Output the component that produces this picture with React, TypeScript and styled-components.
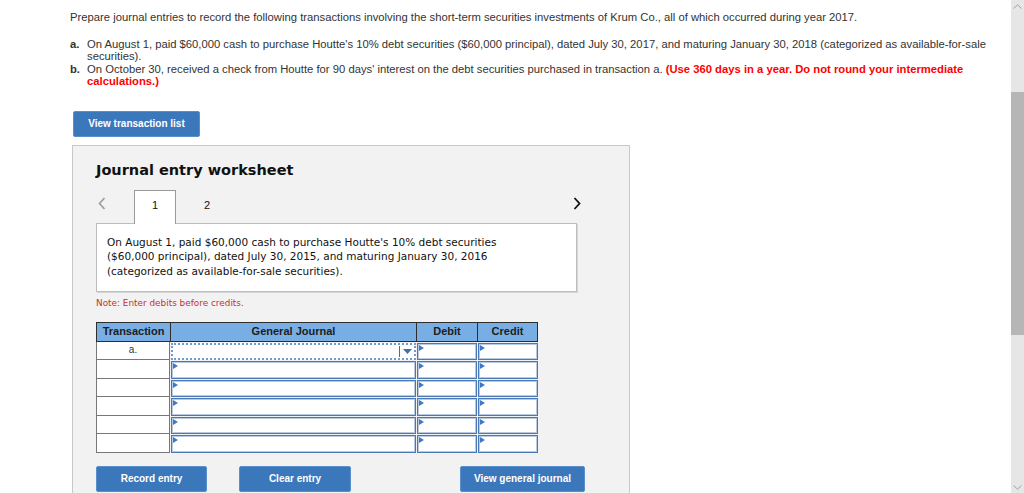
import React from 'react';
import styled, { createGlobalStyle } from 'styled-components';

const GlobalStyle = createGlobalStyle`
  html, body {
    margin: 0;
    padding: 0;
    background: #fff;
    overflow: hidden;
  }
  body {
    font-family: "Liberation Sans", Arial, sans-serif;
  }
`;

const rows = ['a.', '', '', '', '', ''];

const App: React.FC = () => {
  return (
    <Page>
      <GlobalStyle />
      <Content>
        <Intro>
          Prepare journal entries to record the following transactions involving the short-term securities investments
          of Krum Co., all of which occurred during year 2017.
        </Intro>
        <ItemList>
          <Item>
            <ItemLabel>a.</ItemLabel>
            <ItemText>
              On August 1, paid $60,000 cash to purchase Houtte's 10% debt securities ($60,000 principal), dated July 30,
              2017, and maturing January 30, 2018 (categorized as available-for-sale securities).
            </ItemText>
          </Item>
          <Item>
            <ItemLabel>b.</ItemLabel>
            <ItemText>
              On October 30, received a check from Houtte for 90 days' interest on the debt securities purchased in
              transaction a. <Warning>(Use 360 days in a year. Do not round your intermediate calculations.)</Warning>
            </ItemText>
          </Item>
        </ItemList>

        <ListButton>View transaction list</ListButton>

        <Worksheet>
          <Title>Journal entry worksheet</Title>
          <TabsRow>
            <ArrowSlot>
              <svg width="8" height="13" viewBox="0 0 8 13">
                <path d="M6.5 1 L1.5 6.5 L6.5 12" fill="none" stroke="#9a9a9a" strokeWidth="1.6" />
              </svg>
            </ArrowSlot>
            <Tab $active>1</Tab>
            <Tab>2</Tab>
            <Spacer />
            <ArrowSlot $right>
              <svg width="8" height="13" viewBox="0 0 8 13">
                <path d="M1.5 1 L6.5 6.5 L1.5 12" fill="none" stroke="#111" strokeWidth="1.8" />
              </svg>
            </ArrowSlot>
          </TabsRow>
          <Description>
            On August 1, paid $60,000 cash to purchase Houtte's 10% debt securities
            <br />
            ($60,000 principal), dated July 30, 2015, and maturing January 30, 2016
            <br />
            (categorized as available-for-sale securities).
          </Description>
          <Note>Note: Enter debits before credits.</Note>

          <JournalGrid>
            <HeadCell>Transaction</HeadCell>
            <HeadCell>General Journal</HeadCell>
            <HeadCell>Debit</HeadCell>
            <HeadCell $last>Credit</HeadCell>
            {rows.map((label, i) => (
              <React.Fragment key={i}>
                <TxCell>{label}</TxCell>
                {i === 0 ? (
                  <FocusCell>
                    <Caret>
                      <svg width="9" height="5" viewBox="0 0 9 5">
                        <path d="M0 0 L9 0 L4.5 5 Z" fill="#3f6fae" />
                      </svg>
                    </Caret>
                  </FocusCell>
                ) : (
                  <EntryCell />
                )}
                <EntryCell />
                <EntryCell />
              </React.Fragment>
            ))}
          </JournalGrid>

          <ButtonRow>
            <ActionButton $w={111}>Record entry</ActionButton>
            <ActionButton $w={112}>Clear entry</ActionButton>
            <Spacer />
            <ActionButton $w={125}>View general journal</ActionButton>
          </ButtonRow>
        </Worksheet>
      </Content>

      <ScrollTrack>
        <ScrollArrow>
          <svg width="9" height="5" viewBox="0 0 9 5">
            <path d="M0.5 4.5 L4.5 0.8 L8.5 4.5" fill="none" stroke="#a0a0a0" strokeWidth="1" />
          </svg>
        </ScrollArrow>
        <ScrollGap $h={80} />
        <ScrollThumb />
        <Spacer />
        <ScrollArrow>
          <svg width="9" height="5" viewBox="0 0 9 5">
            <path d="M0.5 0.5 L4.5 4.2 L8.5 0.5" fill="none" stroke="#a0a0a0" strokeWidth="1" />
          </svg>
        </ScrollArrow>
      </ScrollTrack>
    </Page>
  );
};

export default App;

const Page = styled.div`
  display: flex;
  height: 493px;
  overflow: hidden;
`;

const Content = styled.div`
  flex: 1;
  padding: 11px 14px 0 70px;
  color: #333;
  font-size: 11.25px;
  line-height: 12.5px;
`;

const Intro = styled.p`
  margin: 0 0 14px;
`;

const ItemList = styled.div`
  display: flex;
  flex-direction: column;
`;

const Item = styled.div`
  display: flex;
`;

const ItemLabel = styled.span`
  flex: 0 0 17px;
  font-weight: bold;
`;

const ItemText = styled.span`
  flex: 1;
`;

const Warning = styled.b`
  color: #f00;
`;

const BlueButton = styled.button`
  background: #3b77bb;
  border: 1px solid #5b8fcb;
  border-radius: 2px;
  color: #fff;
  font-family: "Liberation Sans", Arial, sans-serif;
  font-weight: bold;
  font-size: 10px;
  height: 26px;
  padding: 0;
  cursor: pointer;
`;

const ListButton = styled(BlueButton)`
  display: block;
  width: 127px;
  margin: 23px 0 0 3px;
`;

const ActionButton = styled(BlueButton)<{ $w: number }>`
  width: ${({ $w }) => $w}px;
`;

const Worksheet = styled.div`
  width: 533px;
  height: 400px;
  margin: 8px 0 0 2px;
  padding: 15px 0 0 23px;
  background: #f2f2f2;
  border: 1px solid #c8c8c8;
`;

const Title = styled.h2`
  margin: 0;
  font-family: "DejaVu Sans", Verdana, sans-serif;
  font-size: 14.5px;
  line-height: 19px;
  font-weight: bold;
  color: #111;
`;

const TabsRow = styled.div`
  display: flex;
  align-items: stretch;
  width: 487px;
  height: 33px;
  margin-top: 10px;
  font-size: 11px;
  color: #111;
`;

const ArrowSlot = styled.div<{ $right?: boolean }>`
  flex: 0 0 38px;
  display: flex;
  align-items: center;
  justify-content: ${({ $right }) => ($right ? 'flex-end' : 'flex-start')};
  padding: 0 2px 6px;
  box-sizing: border-box;
`;

const Tab = styled.div<{ $active?: boolean }>`
  width: ${({ $active }) => ($active ? '42px' : '62px')};
  display: flex;
  align-items: center;
  justify-content: center;
  padding-bottom: 4px;
  box-sizing: border-box;
  background: ${({ $active }) => ($active ? '#fff' : 'transparent')};
  border: 1px solid ${({ $active }) => ($active ? '#9a9a9a' : 'transparent')};
  border-bottom: none;
  margin-bottom: -1px;
  position: relative;
  z-index: 1;
`;

const Spacer = styled.div`
  flex: 1;
`;

const Description = styled.div`
  width: 481px;
  height: 69px;
  box-sizing: border-box;
  padding: 11px 10px 0;
  background: #fff;
  border: 1px solid #bdbdbd;
  box-shadow: 1px 1px 0 #d6d6d6;
  font-family: "DejaVu Sans", Verdana, sans-serif;
  font-size: 10.5px;
  line-height: 14.5px;
  color: #111;
`;

const Note = styled.div`
  margin-top: 6px;
  font-family: "DejaVu Sans", Verdana, sans-serif;
  font-size: 8.9px;
  line-height: 11px;
  color: #c8302c;
`;

const JournalGrid = styled.div`
  display: grid;
  grid-template-columns: 74px 246px 61px 61px;
  grid-template-rows: 20px repeat(6, 18.5px);
  width: 442px;
  margin-top: 13px;
  font-size: 11px;
`;

const HeadCell = styled.div<{ $last?: boolean }>`
  display: flex;
  align-items: center;
  justify-content: center;
  background: #79aee5;
  font-weight: bold;
  color: #1d1d1d;
  border: 1px solid #2e2e2e;
  border-right-width: ${({ $last }) => ($last ? '1px' : '0')};
  box-sizing: border-box;
`;

const TxCell = styled.div`
  display: flex;
  align-items: center;
  justify-content: center;
  background: #fff;
  color: #333;
  font-size: 10px;
  border: 1px solid #777;
  border-top: none;
  box-sizing: border-box;
`;

const EntryCell = styled.div`
  position: relative;
  background: #fff;
  border: 1px solid #4a78b2;
  box-shadow: inset 0 0 0 1px #b9cbe3;
  margin: 1px 0 0 1px;
  box-sizing: border-box;

  &::before {
    content: '';
    position: absolute;
    top: 1px;
    left: 1px;
    border-left: 5px solid #3e78c6;
    border-top: 3px solid transparent;
    border-bottom: 3px solid transparent;
  }
`;

const FocusCell = styled.div`
  display: flex;
  justify-content: flex-end;
  align-items: stretch;
  background: #fff;
  border: 2px dotted #6f9bd1;
  margin: 1px 0 0 1px;
  box-sizing: border-box;
`;

const Caret = styled.div`
  display: flex;
  align-items: center;
  justify-content: center;
  width: 14px;
  border-left: 1px solid #3f6fae;
  margin: 1px 0;
`;

const ButtonRow = styled.div`
  display: flex;
  gap: 32px;
  width: 489px;
  margin-top: 13px;
`;

const ScrollTrack = styled.div`
  flex: 0 0 13px;
  display: flex;
  flex-direction: column;
  align-items: stretch;
  background: #e6e6e6;
`;

const ScrollArrow = styled.div`
  height: 12px;
  display: flex;
  align-items: center;
  justify-content: center;
`;

const ScrollGap = styled.div<{ $h: number }>`
  height: ${({ $h }) => $h}px;
`;

const ScrollThumb = styled.div`
  height: 243px;
  background: #b6b6b6;
`;
